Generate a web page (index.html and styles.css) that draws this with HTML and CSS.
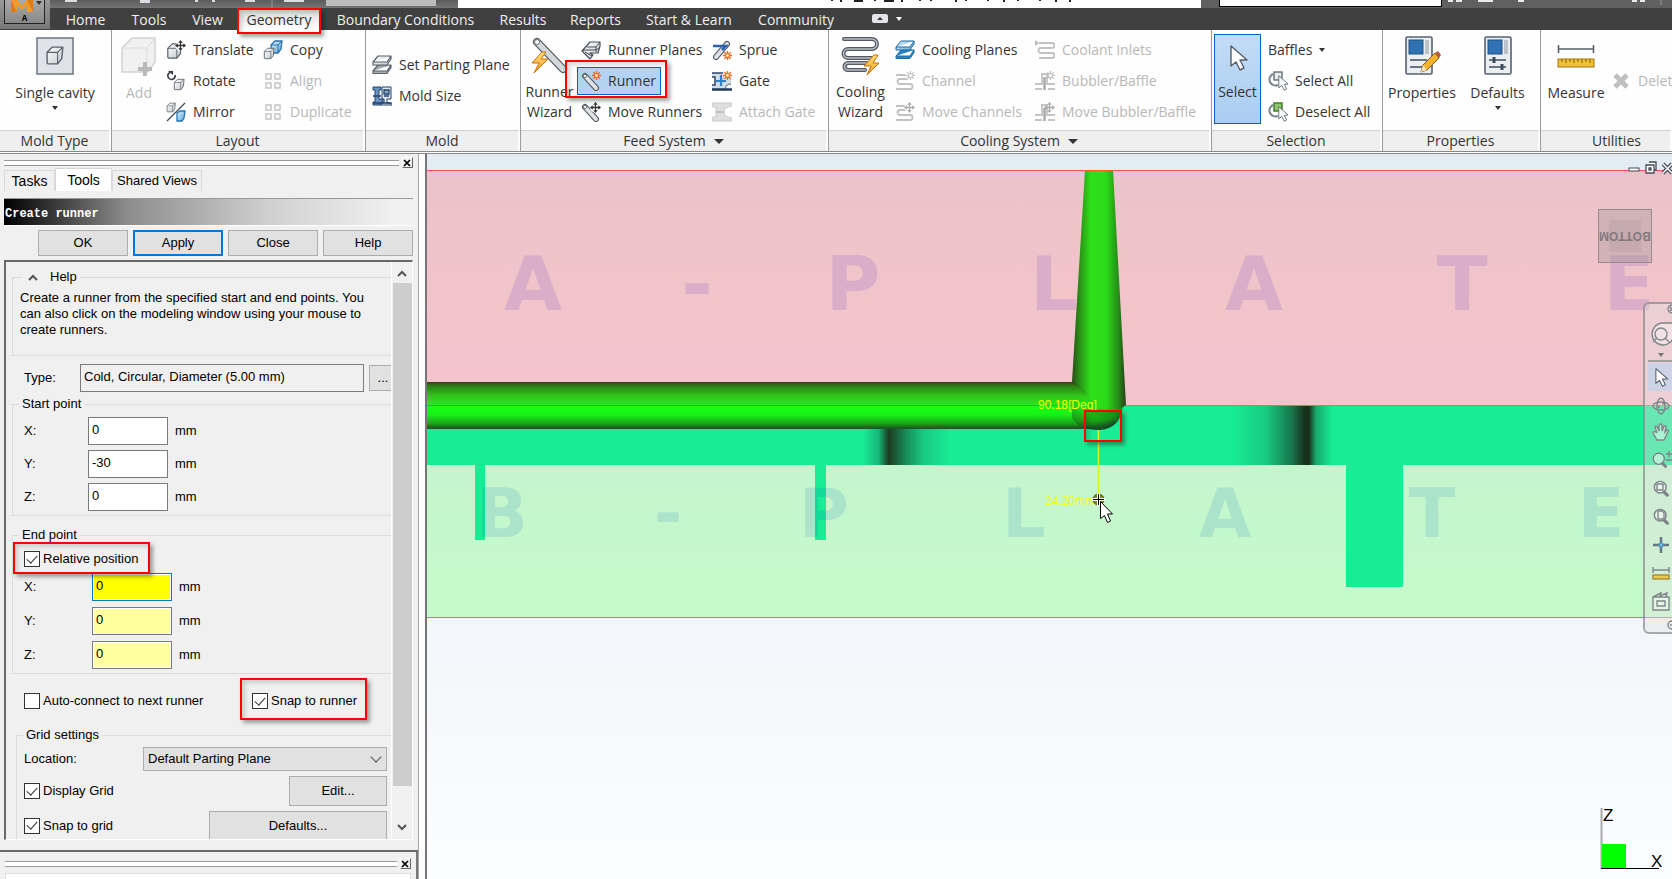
FILE: index.html
```html
<!DOCTYPE html>
<html lang="en">
<head>
<meta charset="utf-8">
<title>Moldflow - Create runner</title>
<link rel="stylesheet" href="styles.css">
</head>
<body>
<svg class="defs" aria-hidden="true">
  <defs>
    <linearGradient id="steel" x1="0" y1="0" x2="1" y2="1"><stop offset="0" stop-color="#fff"/><stop offset="1" stop-color="#c3c7cc"/></linearGradient>
    <linearGradient id="bolt-fill" x1="0" y1="0" x2="0" y2="1"><stop offset="0" stop-color="#ffe27a"/><stop offset="1" stop-color="#f39a1c"/></linearGradient>
    <linearGradient id="blue-fill" x1="0" y1="0" x2="1" y2="1"><stop offset="0" stop-color="#dff1fc"/><stop offset="1" stop-color="#5ba7da"/></linearGradient>
    <symbol id="cube" viewBox="0 0 20 20"><path d="M2 7l5-5h10l-1 11-4 5H3q-1 0-1-1z" fill="url(#steel)" stroke="#59616b" stroke-width="1.3" stroke-linejoin="round"/><path d="M2 7h10l5-5M12 7v11" fill="none" stroke="#59616b"/></symbol>
    <symbol id="star" viewBox="0 0 10 10"><path d="M5 0v10M0 5h10M1.5 1.5l7 7M8.5 1.5l-7 7" stroke="#f0641e" stroke-width="1.5"/><circle cx="5" cy="5" r="2.2" fill="#ffe9b0" stroke="#f0641e"/></symbol>
    <symbol id="star-off" viewBox="0 0 10 10"><path d="M5 0v10M0 5h10M1.5 1.5l7 7M8.5 1.5l-7 7" stroke="#bbb" stroke-width="1.3"/><circle cx="5" cy="5" r="2.2" fill="#fff" stroke="#bbb"/></symbol>
    <symbol id="move" viewBox="0 0 12 12"><path d="M6 1v10M1 6h10" stroke="currentColor" stroke-width="1.4"/><path d="M6 0l2.4 3H3.600zM6 12l2.400-3H3.600zM0 6l3-2.400v4.800zM12 6L9 3.600v4.800z" fill="currentColor"/></symbol>
    <symbol id="translate" viewBox="0 0 20 20"><use href="#cube" x="0" y="2" width="18" height="18"/><circle cx="14.500" cy="6" r="5" fill="#fff"/><use href="#move" x="9" y="0" width="11" height="11"/></symbol>
    <symbol id="rotate" viewBox="0 0 20 20"><use href="#cube" x="7" y="7" width="13" height="13"/><path d="M4 1.500a3.600 3.600 0 1 0 5 2.500" fill="none" stroke="#333b45" stroke-width="1.600"/><path d="M2 0h5v4z" fill="#333b45"/></symbol>
    <symbol id="mirror" viewBox="0 0 20 20"><use href="#cube" x="0" y="0" width="11" height="11"/><path d="M11 11l3-2h5l-1 7-2 3h-5z" fill="url(#blue-fill)" stroke="#2274b8" stroke-width="1.300"/><path d="M19 1L1 19" stroke="#444b55" stroke-width="1.200"/></symbol>
    <symbol id="copy" viewBox="0 0 20 20"><path d="M8 5l4-4h7l-1 8-3 4H8z" fill="url(#blue-fill)" stroke="#2b74ae" stroke-width="1.300"/><path d="M8 5h7l4-4M15 5v7" fill="none" stroke="#2b74ae"/><use href="#cube" x="0" y="7" width="13" height="13"/></symbol>
    <symbol id="grid4" viewBox="0 0 20 20"><path d="M3 3h5v5H3zM12 3h5v5h-5zM3 12h5v5H3zM12 12h5v5h-5z" fill="#fff" stroke="#c4c4c4" stroke-width="1.500"/></symbol>
    <symbol id="planes" viewBox="0 0 20 20"><path d="M1 16l5-6h13l-4 6zM1 16v2.500h14l4-6V10" fill="#a9adb3" stroke="#59616b" stroke-width="1.200" stroke-linejoin="round"/><path d="M1 7l5-6h13l-4 6zM1 7v3h14l4-6V1" fill="url(#steel)" stroke="#59616b" stroke-width="1.200" stroke-linejoin="round"/></symbol>
    <symbol id="planes-blue" viewBox="0 0 20 20"><path d="M1 16l5-6h13l-4 6zM1 16v2.500h14l4-6V10" fill="#2b86c6" stroke="#1b6aa6" stroke-linejoin="round"/><path d="M1 7l5-6h13l-4 6zM1 7v3h14l4-6V1" fill="url(#blue-fill)" stroke="#1b6aa6" stroke-linejoin="round"/></symbol>
    <symbol id="moldsize" viewBox="0 0 20 20"><path d="M1 1h8v3H7v9h4v3H9v3H1v-3h2V4H1z" fill="#6c93bd" stroke="#22426b"/><path d="M10 1h9v12h-4v4h5v2H9v-2h3v-4h-2z" fill="#dfe7f0" stroke="#22426b"/><path d="M12 4h5v4h-5zM12 10h5M1 10h8M1 17h18" stroke="#22426b" stroke-width="1.300" fill="#87a9cc"/></symbol>
    <symbol id="rplanes" viewBox="0 0 20 20"><path d="M1 11l8-9h10v4l-2 7H9l3 2-3 4z" fill="url(#steel)" stroke="#4a4f56" stroke-width="1.200" stroke-linejoin="round"/><path d="M6 7h9l4-5M1 11l3-1h11l3-2M15 7v5M4 12l7 4" fill="none" stroke="#4a4f56"/></symbol>
    <symbol id="tube" viewBox="0 0 20 20"><path d="M4 5l11 12" stroke="#555c65" stroke-width="6" stroke-linecap="round"/><path d="M4 5l11 12" stroke="#dfe3e6" stroke-width="3.800" stroke-linecap="round"/><circle cx="4" cy="5" r="1.600" fill="#fff" stroke="#777"/></symbol>
    <symbol id="runner" viewBox="0 0 20 20"><use href="#tube"/><use href="#star" x="11" y="0" width="9" height="9"/></symbol>
    <symbol id="moverunner" viewBox="0 0 20 20"><use href="#tube"/><circle cx="14" cy="5.500" r="5" fill="#fff"/><use href="#move" x="9" y="0" width="11" height="11"/></symbol>
    <symbol id="sprue" viewBox="0 0 20 20"><path d="M4 17L15 4" stroke="#555c65" stroke-width="6" stroke-linecap="round"/><path d="M4 17L15 4" stroke="#dfe3e6" stroke-width="3.800" stroke-linecap="round"/><path d="M1 6h13l-4 4" stroke="#2c5fae" stroke-width="2.500" fill="none"/><use href="#star" x="11" y="11" width="9" height="9"/></symbol>
    <symbol id="gate" viewBox="0 0 20 20"><path d="M0 2h11v2l2 3h6v7h-5l-2 4H0v-4h3V6H0z" fill="#d3dbe3"/><path d="M0 2h11M0 6h3v8H0" fill="none" stroke="#2c4468" stroke-width="1.500"/><path d="M4 10h10M9 4v11" stroke="#2c84c8" stroke-width="2.200"/><path d="M19 13q-5 0-6 5" fill="none" stroke="#8a97a6" stroke-width="1.500"/><path d="M0 18.500h20" stroke="#22365a" stroke-width="2.500"/><use href="#star" x="11" y="0" width="9" height="9"/></symbol>
    <symbol id="gate-off" viewBox="0 0 20 20"><path d="M0 1h20v3q-8 1-8 6t8 6v3H0v-4h4V5H0z" fill="#dedede" stroke="#cacaca"/><path d="M4 10h8" stroke="#b5b5b5" stroke-width="1.500"/></symbol>
    <symbol id="coil-off" viewBox="0 0 20 20"><path d="M1 4h12a2 2 0 0 1 2 2 2 2 0 0 1-2 2H5a2 2 0 0 0 0 5h10a2 2 0 0 1 0 5H1" fill="none" stroke="#c2c2c2" stroke-width="1.800"/></symbol>
    <symbol id="channel" viewBox="0 0 20 20"><use href="#coil-off"/><circle cx="15.500" cy="4.500" r="5" fill="#fff"/><use href="#star-off" x="11" y="0" width="9" height="9"/></symbol>
    <symbol id="movechannel" viewBox="0 0 20 20"><use href="#coil-off"/><circle cx="14.500" cy="5.500" r="5" fill="#fff"/><use href="#move" x="9" y="0" width="11" height="11" color="#aaa"/></symbol>
    <symbol id="inlets" viewBox="0 0 20 20"><path d="M4 3h13a2 2 0 0 1 0 5H6a2 2 0 0 0 0 5h11a2 2 0 0 1 0 5H4" fill="none" stroke="#c2c2c2" stroke-width="1.800"/><path d="M0 0l4 3-4 3z" fill="#bbb"/></symbol>
    <symbol id="bubbler" viewBox="0 0 20 20"><path d="M0 13h7V3h5v10h8M0 18h7M13 18h7" fill="none" stroke="#c4c4c4" stroke-width="1.800"/><path d="M9.500 6v13" stroke="#aaa" stroke-width="2.500"/></symbol>
    <symbol id="bubblerstar" viewBox="0 0 20 20"><use href="#bubbler"/><use href="#star-off" x="11" y="0" width="9" height="9"/></symbol>
    <symbol id="bubblermove" viewBox="0 0 20 20"><use href="#bubbler"/><use href="#move" x="9" y="0" width="11" height="11" color="#aaa"/></symbol>
    <symbol id="cursor" viewBox="0 0 20 26"><path d="M3 1v20l5-4 4 8 4-2-4-8h7z" fill="#fff" stroke="#555e69" stroke-width="1.400" stroke-linejoin="round"/></symbol>
    <symbol id="selectall" viewBox="0 0 20 20"><path d="M5 3a6 6 0 1 0 5 11" fill="none" stroke="#7d858e" stroke-width="2"/><rect x="6" y="1" width="8" height="8" fill="#e6eaee" stroke="#5b646f" stroke-width="1.300"/><use href="#cursor" x="9" y="4" width="12" height="16"/></symbol>
    <symbol id="deselectall" viewBox="0 0 20 20"><path d="M5 3a6 6 0 1 0 5 11" fill="none" stroke="#7d858e" stroke-width="2"/><rect x="6" y="1" width="8" height="8" fill="#8fc46c" stroke="#3f7f2b" stroke-width="1.500"/><use href="#cursor" x="9" y="4" width="12" height="16"/></symbol>
    <symbol id="sheet" viewBox="0 0 36 40"><rect x="2" y="1" width="26" height="37" rx="1.500" fill="#eceef0" stroke="#566171" stroke-width="1.600"/><rect x="5" y="4" width="14" height="14" fill="#2f71b3" stroke="#23517f"/><path d="M21 4h4v14h-4z" fill="#bcc2c9"/><path d="M6 24h17M6 31h17" stroke="#3c4c60" stroke-width="1.600"/></symbol>
    <symbol id="loupe" viewBox="0 0 20 20"><path d="M11 12l6 6" stroke="#7c8388" stroke-width="3.500"/><circle cx="8" cy="8" r="6.500" fill="#fff" fill-opacity=".5" stroke="#7c8388" stroke-width="1.600"/></symbol>
  </defs>
</svg>

<header class="top">
  <div class="titlebar">
    <div class="quick">
      <svg width="408" height="8"><path d="M15 0h12v2H15zM90 0h10v3H90zM145 0h3v2h-3zM162 0h3v2h-3zM195 0h10v2H195zM234 0h20v2H234z" fill="#d9dde2"/><path d="M222 0v8" stroke="#999"/></svg>
      <span class="quick-box"></span>
    </div>
    <svg class="title-marks" width="290" height="4"><path d="M14 0v1M23 0v2M36 1h9M57 0v1M66 1h10M84 0v2M102 0v1M113 0v1M138 0v2M148 0v1M170 0v1M186 0v2M200 0v1M222 0v1M238 0v2M252 0v2" stroke="#222" stroke-width="2"/></svg>
    <input class="search" aria-label="Search">
    <svg class="tool-marks" width="230" height="8"><path d="M6 0h5v2H6zM14 0h6v2h-6zM36 0h15v2H36zM76 0h6v2h-6zM190 0h5v2h-5zM198 0h5v2h-5z" fill="#e9e9ee"/><path d="M219 0v5" stroke="#999"/></svg>
  </div>
  <nav class="tabs">
    <a href="#home">Home</a><a href="#tools">Tools</a><a href="#view">View</a><a class="on mark" href="#geometry">Geometry</a><a href="#boundary">Boundary Conditions</a><a href="#results">Results</a><a href="#reports">Reports</a><a href="#learn">Start &amp; Learn</a><a href="#community">Community</a>
    <button class="collapse" aria-label="Collapse ribbon"><svg width="32" height="10"><rect width="16" height="9" rx="2" fill="#e4e4ea"/><path d="M5 6l3-3 3 3z" fill="#333"/><path d="M24 3h6l-3 4z" fill="#fff"/></svg></button>
  </nav>
  <button class="app" aria-label="Application menu"><span class="app-face"><svg width="34" height="12"><path d="M3 12V0h6l5 6 5-6h6v12h-6V5l-5 5-5-5v7z" fill="#f39a24"/><path d="M3 0l6 12H3zM19 0l6 12V0z" fill="#c96a14" opacity=".6"/><path d="M28 1h6l-3 4z" fill="#333"/></svg><b>A</b></span></button>
</header>

<section class="ribbon">
  <div class="group g-type">
    <div class="body">
      <button class="big"><svg width="40" height="40"><rect x="2" y="2" width="36" height="36" fill="#e0e3ea" stroke="#6b7583" stroke-width="1.500"/><use href="#cube" x="10" y="9" width="21" height="21"/></svg>Single cavity<i class="arr"></i></button>
    </div><h2>Mold Type</h2>
  </div>
  <div class="group g-layout">
    <div class="body">
      <button class="big off" disabled><svg width="40" height="40"><path d="M3 12L13 2h23v24L29 36H3z" fill="#f1f1f1" stroke="#d2d2d2" stroke-width="1.500"/><path d="M3 12h25l8-10M28 12v24" fill="none" stroke="#dcdcdc"/><path d="M26 26v14M19 33h14" stroke="#b9b9b9" stroke-width="4"/></svg>Add</button>
      <div class="col"><button><svg><use href="#translate"/></svg>Translate</button><button><svg><use href="#rotate"/></svg>Rotate</button><button><svg><use href="#mirror"/></svg>Mirror</button></div>
      <div class="col"><button><svg><use href="#copy"/></svg>Copy</button><button class="off" disabled><svg><use href="#grid4"/></svg>Align</button><button class="off" disabled><svg><use href="#grid4"/></svg>Duplicate</button></div>
    </div><h2>Layout</h2>
  </div>
  <div class="group g-mold">
    <div class="body"><div class="col two"><button><svg><use href="#planes"/></svg>Set Parting Plane</button><button><svg><use href="#moldsize"/></svg>Mold Size</button></div></div><h2>Mold</h2>
  </div>
  <div class="group g-feed">
    <div class="body">
      <button class="big wiz"><svg width="40" height="40"><path d="M7 6l26 27" stroke="#555c65" stroke-width="8" stroke-linecap="round"/><path d="M7 6l26 27" stroke="#d3d8dc" stroke-width="5.500" stroke-linecap="round"/><circle cx="7" cy="6" r="2.500" fill="#fff" stroke="#777"/><path d="M12 16L2 27h7l-5 10 14-14h-7l5-7z" fill="url(#bolt-fill)" stroke="#c9700c"/></svg>Runner<br>Wizard</button>
      <div class="col"><button><svg><use href="#rplanes"/></svg>Runner Planes</button><button class="active mark"><svg><use href="#runner"/></svg>Runner</button><button><svg><use href="#moverunner"/></svg>Move Runners</button></div>
      <div class="col"><button><svg><use href="#sprue"/></svg>Sprue</button><button><svg><use href="#gate"/></svg>Gate</button><button class="off" disabled><svg><use href="#gate-off"/></svg>Attach Gate</button></div>
    </div><h2>Feed System<i class="arr wide"></i></h2>
  </div>
  <div class="group g-cool">
    <div class="body">
      <button class="big wiz"><svg width="40" height="40"><g fill="none" stroke-linecap="round"><path d="M3 3h28a5 5 0 0 1 0 10H7a4 4 0 0 0 0 9h24M26 27H7a3 3 0 0 0 0 7h17" stroke="#555a62" stroke-width="4"/><path d="M3 3h28a5 5 0 0 1 0 10H7a4 4 0 0 0 0 9h24M26 27H7a3 3 0 0 0 0 7h17" stroke="#b9bec6" stroke-width="1.500"/></g><path d="M33 19L23 30h7l-4 9 12-12h-6l5-8z" fill="url(#bolt-fill)" stroke="#c9700c"/></svg>Cooling<br>Wizard</button>
      <div class="col"><button><svg><use href="#planes-blue"/></svg>Cooling Planes</button><button class="off" disabled><svg><use href="#channel"/></svg>Channel</button><button class="off" disabled><svg><use href="#movechannel"/></svg>Move Channels</button></div>
      <div class="col"><button class="off" disabled><svg><use href="#inlets"/></svg>Coolant Inlets</button><button class="off" disabled><svg><use href="#bubblerstar"/></svg>Bubbler/Baffle</button><button class="off" disabled><svg><use href="#bubblermove"/></svg>Move Bubbler/Baffle</button></div>
    </div><h2>Cooling System<i class="arr wide"></i></h2>
  </div>
  <div class="group g-sel">
    <div class="body">
      <button class="big select-tool"><svg width="20" height="26"><use href="#cursor"/></svg>Select</button>
      <div class="col"><button>Baffles<i class="arr"></i></button><button><svg><use href="#selectall"/></svg>Select All</button><button><svg><use href="#deselectall"/></svg>Deselect All</button></div>
    </div><h2>Selection</h2>
  </div>
  <div class="group g-prop">
    <div class="body">
      <button class="big"><svg width="36" height="40"><use href="#sheet"/><path d="M17 36l2-7 12-12 4 5-12 12z" fill="#f3b32c" stroke="#8a5a14"/><path d="M31 17l4 5 2-3-3-4z" fill="#b85a3a"/><path d="M17 36l2-7 4 5z" fill="#f6e3c0"/></svg>Properties</button>
      <button class="big"><svg width="36" height="40"><g transform="translate(3 0)"><use href="#sheet" width="36" height="40"/><path d="M11 21v6M19 28v6" stroke="#3c4c60" stroke-width="3"/></g></svg>Defaults<i class="arr"></i></button>
    </div><h2>Properties</h2>
  </div>
  <div class="group g-util">
    <div class="body">
      <button class="big"><svg width="40" height="40"><path d="M2 13h36M2.500 9v8M37.500 9v8" stroke="#59626c" stroke-width="1.600"/><rect x="2" y="23" width="36" height="8" fill="#f0c035" stroke="#a87410"/><path d="M6 23v3M10 23v4M14 23v3M18 23v4M22 23v3M26 23v4M30 23v3M34 23v4" stroke="#8a5f0c"/></svg>Measure</button>
      <div class="col mid"><button class="off" disabled><svg viewBox="0 0 20 20"><path d="M4 4l12 12M16 4L4 16" stroke="#c0c0c0" stroke-width="5"/></svg>Delete</button></div>
    </div><h2>Utilities</h2>
  </div>
</section>

<main class="work">
  <aside class="side">
    <section class="dock">
      <div class="grip"><span></span><button aria-label="Close panel"><svg width="9" height="8"><path d="M1 1l6 6M7 1L1 7" stroke="#000" stroke-width="1.700"/></svg></button></div>
      <div class="ptabs"><button>Tasks</button><button class="on">Tools</button><button>Shared Views</button></div>
      <h1>Create runner</h1>
      <div class="actions"><button>OK</button><button class="default">Apply</button><button>Close</button><button>Help</button></div>
      <div class="scroller">
        <form class="form">
          <fieldset class="help"><legend><svg width="10" height="7"><path d="M1 6l4-4 4 4" fill="none" stroke="#555" stroke-width="2"/></svg>Help</legend>
            <p>Create a runner from the specified start and end points. You can also click on the modeling window using your mouse to create runners.</p>
          </fieldset>
          <div class="type"><label for="type">Type:</label><input id="type" value="Cold, Circular, Diameter (5.00 mm)" readonly><button type="button">...</button></div>
          <fieldset class="start"><legend>Start point</legend>
            <div class="xyz"><label for="sx">X:</label><input id="sx" value="0"><span>mm</span></div>
            <div class="xyz"><label for="sy">Y:</label><input id="sy" value="-30"><span>mm</span></div>
            <div class="xyz"><label for="sz">Z:</label><input id="sz" value="0"><span>mm</span></div>
          </fieldset>
          <fieldset class="end"><legend>End point</legend>
            <label class="check mark"><input type="checkbox" checked>Relative position</label>
            <div class="xyz"><label for="ex">X:</label><input id="ex" class="focus" value="0"><span>mm</span></div>
            <div class="xyz"><label for="ey">Y:</label><input id="ey" value="0"><span>mm</span></div>
            <div class="xyz"><label for="ez">Z:</label><input id="ez" value="0"><span>mm</span></div>
          </fieldset>
          <div class="snap"><label class="check"><input type="checkbox">Auto-connect to next runner</label><label class="check mark"><input type="checkbox" checked>Snap to runner</label></div>
          <fieldset class="gridset"><legend>Grid settings</legend>
            <div class="row loc"><label for="loc">Location:</label><select id="loc"><option>Default Parting Plane</option></select></div>
            <div class="row"><label class="check"><input type="checkbox" checked>Display Grid</label><button type="button" class="edit">Edit...</button></div>
            <div class="row"><label class="check"><input type="checkbox" checked>Snap to grid</label><button type="button" class="defaults">Defaults...</button></div>
          </fieldset>
        </form>
        <div class="bar"><svg width="10" height="7"><path d="M1 6l4-4 4 4" fill="none" stroke="#555" stroke-width="2"/></svg><span></span><svg width="10" height="7"><path d="M1 1l4 4 4-4" fill="none" stroke="#555" stroke-width="2"/></svg></div>
      </div>
    </section>
    <section class="dock2"><div class="grip"><span></span><button aria-label="Close log"><svg width="9" height="8"><path d="M1 1l6 6M7 1L1 7" stroke="#000" stroke-width="1.700"/></svg></button></div><div class="log"></div></section>
  </aside>

  <section class="view" aria-label="Model view">
    <svg class="scene">
      <defs>
        <linearGradient id="pink" x1="0" y1="0" x2="0" y2="1"><stop offset="0" stop-color="#ebc3c8"/><stop offset=".5" stop-color="#f1c4ca"/><stop offset="1" stop-color="#f4c4cc"/></linearGradient>
        <linearGradient id="lime" x1="0" y1="0" x2="0" y2="1"><stop offset="0" stop-color="#c4f5cd"/><stop offset="1" stop-color="#c6facb"/></linearGradient>
        <linearGradient id="pipe" x1="0" y1="0" x2="0" y2="1"><stop offset="0" stop-color="#3a3a1c"/><stop offset=".08" stop-color="#2c7c14"/><stop offset=".3" stop-color="#2fc818"/><stop offset=".48" stop-color="#30e41a"/><stop offset=".54" stop-color="#14ff14"/><stop offset=".7" stop-color="#18f018"/><stop offset=".88" stop-color="#18a818"/><stop offset=".97" stop-color="#186418"/><stop offset="1" stop-color="#205030"/></linearGradient>
        <linearGradient id="cone" x1="0" y1="0" x2="1" y2="0"><stop offset="0" stop-color="#2c4a18"/><stop offset=".14" stop-color="#2a9018"/><stop offset=".35" stop-color="#2ee018"/><stop offset=".62" stop-color="#2cdc18"/><stop offset=".86" stop-color="#268c18"/><stop offset="1" stop-color="#2a3c18"/></linearGradient>
        <radialGradient id="cap" cx=".35" cy=".1" r=".85"><stop offset=".3" stop-color="#20d818"/><stop offset=".75" stop-color="#189a18"/><stop offset="1" stop-color="#174c20"/></radialGradient>
        <linearGradient id="fold-a"><stop offset="0" stop-color="#18ec94"/><stop offset=".18" stop-color="#18b478"/><stop offset=".29" stop-color="#1c3c24"/><stop offset=".33" stop-color="#1c4c2c"/><stop offset=".5" stop-color="#18905c"/><stop offset=".7" stop-color="#18cc84"/><stop offset="1" stop-color="#18ec94"/></linearGradient>
        <linearGradient id="fold-b"><stop offset="0" stop-color="#18ec94"/><stop offset=".35" stop-color="#18c880"/><stop offset=".6" stop-color="#18744c"/><stop offset=".73" stop-color="#18301c"/><stop offset=".77" stop-color="#18301c"/><stop offset=".84" stop-color="#18a86c"/><stop offset="1" stop-color="#18ec94"/></linearGradient>
      </defs>
      <rect y="17" width="100%" height="235" fill="url(#pink)"/>
      <rect y="16" width="100%" height="1" fill="#ff4d50"/>
      <rect y="311" width="100%" height="152" fill="url(#lime)"/>
      <rect y="252" width="100%" height="59" fill="#18ec94"/>
      <path d="M49 311h10v75H49zM389 311h11v75h-11zM920 311h57v122h-57z" fill="#18ec94"/>
      <rect x="437" y="274" width="88" height="37" fill="url(#fold-a)"/>
      <rect x="806" y="252" width="100" height="59" fill="url(#fold-b)"/>
      <rect y="463" width="100%" height="1" fill="#00f000"/>
      <rect y="251" width="100%" height="1" fill="#8c9c60"/>
      <rect y="228" width="673" height="47" fill="url(#pipe)"/>
      <rect y="251" width="650" height="1" fill="#5c9c30"/>
      <path d="M646 246h51v5q-2 24-24 25-20 0-27-12z" fill="url(#cap)"/>
      <path d="M659 16h28l13 235q-10 9-31 2-13-23-23-25z" fill="url(#cone)"/>
      <rect x="659" y="16" width="28" height="1" fill="#f06018"/>
      <g class="plate plate-a"><text x="107" y="156">A</text><text x="271" y="156">-</text><text x="427" y="156">P</text><text x="628" y="156">L</text><text x="828" y="156">A</text><text x="1036" y="156">T</text><text x="1203" y="156">E</text></g>
      <g class="plate plate-b"><text x="76" y="383">B</text><text x="242" y="383">-</text><text x="398" y="383">P</text><text x="598" y="383">L</text><text x="799" y="383">A</text><text x="1006" y="383">T</text><text x="1175" y="383">E</text></g>
      <path d="M672.500 276v66" stroke="#e6ee20" stroke-width="1.500"/>
      <text class="dim" x="612" y="255">90.18[Deg]</text><text class="dim" x="619" y="351">24.20mm</text>
      <circle cx="672.500" cy="345.500" r="5.500" fill="#7d8c20" stroke="#4a5410"/><path d="M672.500 339v13M666 345.500h13" stroke="#fff" stroke-width="3"/><path d="M672.500 340v11M667 345.500h11" stroke="#000"/>
      <path d="M674.500 347.500v17l4-3 3 7 3-1.500-3-7h5z" fill="#fff" stroke="#000"/>
    </svg>
    <span class="pick mark"></span>
    <div class="winbtns">
      <button aria-label="Minimize"><svg width="12" height="14"><rect x="1" y="7" width="10" height="3" fill="#fff" stroke="#444c55"/></svg></button>
      <button aria-label="Restore"><svg width="12" height="14"><path d="M4 1h7v8h-2M1 4h8v8H1zM4 7h2v2H4z" fill="#fff" stroke="#444c55" stroke-width="1.300"/></svg></button>
      <button aria-label="Close"><svg width="12" height="14"><path d="M1 3l9 9M10 3l-9 9" stroke="#444c55" stroke-width="4"/><path d="M1 3l9 9M10 3l-9 9" stroke="#fff" stroke-width="1.500"/></svg></button>
    </div>
    <div class="cube"><span>BOTTOM</span></div>
    <div class="navbar">
      <svg width="36" height="332" fill="none" stroke="#81878b" stroke-width="1.400">
        <circle cx="27" cy="5" r="4"/><path d="M24.500 2.500l5 5M29.500 2.500l-5 5"/>
        <g transform="translate(-1 -2)">
        <path d="M18 21h12v12a11 11 0 1 1-12-12z" fill="#fff" fill-opacity=".4"/><circle cx="17" cy="32" r="6"/><path d="M9 40l4-4M21 36l4 4"/>
        <path d="M14 51h6l-3 4z" fill="#777" stroke="none"/><path d="M4 59h32"/>
        <rect x="4" y="61" width="32" height="28" fill="#b9d4f4" fill-opacity=".6" stroke="none"/>
        <use href="#cursor" x="9" y="66" width="16" height="19"/>
        <ellipse cx="17" cy="104" rx="8" ry="4"/><ellipse cx="17" cy="104" rx="4" ry="8"/><path d="M13 105h3M18 101h4M20 99v4"/>
        <path d="M13 138l-4-7q0-2 3-1l1 1-2-6q1-2 3 1l1 3v-6q2-2 3 0v6l2-5q2-1 2 1l-1 5 2-2q2 0 1 2l-4 8z" fill="#fff" fill-opacity=".45"/>
        <use href="#loupe" x="8" y="150" width="17" height="17"/><path d="M22 152h6M25 149v6M22 158h6"/>
        <use href="#loupe" x="9" y="178" width="18" height="18"/><path d="M13 182h6v6h-6z"/>
        <use href="#loupe" x="9" y="206" width="18" height="18"/><path d="M14 209h4l2 2v6h-6z"/>
        <path d="M17 235v6M17 245v6M9 243h6M19 243h6" stroke-width="2.500" stroke="#68777f"/><circle cx="17" cy="243" r="2" fill="#77b8dc" stroke="#4b99c4"/>
        <path d="M9 268h16M9 265v6M25 265v6"/><rect x="9" y="273" width="16" height="4" fill="#ecc84a" stroke="#a88a3c"/>
        <path d="M9 295h16v13H9zM9 295l8-4-1 3 7-3-1 4M13 299h8v5h-8z" fill="#fff" fill-opacity=".4"/>
        <circle cx="28" cy="323" r="4"/><path d="M26 323h4"/>
        </g>
      </svg>
    </div>
    <svg class="triad" width="70" height="72"><path d="M6.500 10v61" stroke="#aaa" stroke-width="2"/><rect x="7" y="46" width="24" height="24" fill="#0f0"/><path d="M6 70.500h58" stroke="#000"/><text x="8" y="23">Z</text><text x="56" y="69">X</text></svg>
  </section>
</main>
</body>
</html>
```
FILE: styles.css
```css
* { box-sizing: border-box; }
html, body { height: 100%; }
body { margin: 0; display: flex; flex-direction: column; overflow: hidden; background: #f0f0f0; color: #000; font: 13px/16px "Liberation Sans", Arial, sans-serif; }
button { font: inherit; color: inherit; padding: 0; border: 0; background: none; white-space: nowrap; }
h1, h2, p, fieldset { margin: 0; padding: 0; }
.defs { position: absolute; width: 0; height: 0; }
svg { flex: none; display: block; }

/* red callout frames */
.mark { position: relative; }
.mark::after { content: ""; position: absolute; inset: 0; border: 2px solid #f00; box-shadow: 3px 3px 4px rgba(0,0,0,.35), inset 3px 3px 4px rgba(0,0,0,.15); pointer-events: none; z-index: 3; }

/* title bar and tabs */
.top { position: relative; flex: none; font-family: "Open Sans", "Noto Sans", sans-serif; }
.titlebar { display: flex; height: 8px; overflow: hidden; background: #606060; }
.quick { display: flex; width: 458px; padding-left: 50px; background: linear-gradient(#5c5c5c, #757575); }
.quick svg { width: 276px; }
.quick-box { width: 110px; height: 6px; background: #bdbdbd; }
.title-marks { flex: 1; background: #fff; padding-left: 360px; overflow: visible; height: 8px; }
.search { width: 223px; margin-left: 18px; height: 7px; padding: 0; border: 1px solid #000; border-top: 0; background: #fff; }
.tabs { display: flex; height: 22px; padding-left: 54px; background: #404040; color: #f0f0f0; font-size: 14px; line-height: 24px; }
.tabs a { color: inherit; text-decoration: none; width: 63px; text-align: center; white-space: nowrap; }
.tabs a:nth-child(2) { width: 64px; }
.tabs a:nth-child(3) { width: 53px; }
.tabs a.on { width: 84px; margin: 0 6px 0 3px; background: linear-gradient(#d9d9d9, #fff); color: #333; }
.tabs a.on::after { bottom: -4px; }
.tabs a:nth-child(5) { width: 157px; }
.tabs a:nth-child(6) { width: 78px; }
.tabs a:nth-child(7) { width: 67px; }
.tabs a:nth-child(8) { width: 120px; }
.tabs a:nth-child(9) { width: 94px; }
.collapse { margin-left: 29px; }
.app { position: absolute; left: 0; top: 0; width: 50px; height: 29px; background: linear-gradient(#9a9a9a, #777); z-index: 2; }
.app-face { display: flex; flex-direction: column; align-items: center; width: 41px; height: 24px; margin: 0 4px 5px; border: 1px solid #222; border-top: 0; background: linear-gradient(#aaa, #888); font-size: 8px; line-height: 11px; color: #000; }

/* ribbon */
.ribbon { display: flex; flex: none; height: 124px; background: #fefefe; border-bottom: 3px double #888; color: #333; font: 14px/20px "Open Sans", "Noto Sans", sans-serif; }
.group { display: flex; flex-direction: column; flex: none; border-right: 1px solid #9a9a9a; }
.body { display: grid; flex: 1; align-items: start; padding-top: 5px; }
.group h2 { display: flex; justify-content: center; align-items: center; gap: 8px; height: 21px; margin-right: 2px; background: #efefef; border-top: 1px solid #d0d0d0; font-size: 14px; font-weight: 400; }
.g-type { width: 112px; } .g-type .body { grid-template-columns: 110px; }
.g-layout { width: 254px; } .g-layout .body { grid-template-columns: 54px 97px 1fr; }
.g-mold { width: 155px; } .g-mold .body { padding-left: 6px; }
.g-feed { width: 308px; } .g-feed .body { grid-template-columns: 60px 131px 1fr; }
.g-cool { width: 383px; } .g-cool .body { grid-template-columns: 66px 140px 1fr; }
.g-sel { width: 171px; } .g-sel .body { grid-template-columns: 54px 1fr; padding-left: 2px; }
.g-prop { width: 158px; } .g-prop .body { grid-template-columns: 78px 73px; }
.g-util { flex: 1; min-width: 0; overflow: hidden; border-right: 0; } .g-util .body { grid-template-columns: 70px 1fr; }
.g-util h2 { padding-left: 22px; }
.col { display: flex; flex-direction: column; align-items: flex-start; gap: 11px; padding-top: 5px; }
.col.two { padding-top: 20px; }
.col.mid { padding-top: 36px; }
.col button { display: flex; align-items: center; gap: 7px; height: 20px; }
.col button svg { width: 20px; height: 20px; }
.big { display: flex; flex-direction: column; align-items: center; padding-top: 1px; line-height: 20px; }
.big > svg { margin-bottom: 7px; overflow: visible; }
.big.wiz { display: block; text-align: center; }
.big.wiz > svg { margin: 0 auto 6px; }
.g-feed .wiz { padding-right: 3px; }
.g-cool .wiz { padding-right: 3px; }
.big > .arr { margin-top: 3px; }
.off { color: #b8b8b8; }
.arr { width: 0; height: 0; border: 3px solid transparent; border-top: 4px solid #333; border-bottom: 0; }
.arr.wide { border-left-width: 5px; border-right-width: 5px; border-top-width: 5px; }
.col button.active { width: 76px; background: #b4d3f3; box-shadow: 0 0 0 3px #b4d3f3, 0 0 0 4px #0a62c4; }
.active.mark::after { inset: -11px -10px -7px -16px; }
.select-tool { width: 47px; height: 90px; margin-top: -1px; padding-top: 10px; border: 1px solid #0a62c4; background: linear-gradient(#c3dcf6, #aacdf0); }
.select-tool > svg { margin-bottom: 11px; }

/* workspace */
.work { display: flex; flex: 1; min-height: 0; }
.side { display: flex; flex-direction: column; width: 427px; flex: none; border-right: 2px solid #76767a; box-shadow: inset -6px 0 #fff, inset -7px 0 #a9a9a9; padding-right: 7px; }
.dock { display: flex; flex-direction: column; flex: 1; min-height: 0; padding: 3px 5px 10px 4px; border-bottom: 2px solid #6a6a6a; }
.grip { display: flex; align-items: center; gap: 3px; height: 11px; }
.grip span { flex: 1; height: 6px; border: 1px solid #999; border-left: 0; border-right: 0; background: #fff; }
.grip button { width: 11px; height: 11px; border: 1px solid; border-color: #fff #666 #666 #fff; }
.ptabs { display: flex; align-items: flex-end; height: 23px; font-size: 14px; }
.ptabs button { height: 21px; padding: 0 4px; border: 1px solid #d9d9d9; border-bottom: 0; }
.ptabs button:first-child { width: 51px; }
.ptabs .on { height: 23px; width: 57px; background: #fff; }
.ptabs button:last-child { font-size: 13px; }
.dock h1 { flex: none; height: 28px; margin-top: 7px; padding-left: 1px; line-height: 30px; color: #fff; background: linear-gradient(90deg, #000 0, #8c8c8c 30%, #d0d0d0 65%, #f0f0f0 95%); border-top: 1px solid #999; border-bottom: 1px solid #fff; font-family: "Liberation Mono", monospace; font-size: 12px; }
.actions { display: flex; justify-content: flex-end; gap: 5px; margin: 4px 0; }
.actions button, .type button, .edit, .defaults { border: 1px solid #adadad; background: #e1e1e1; }
.actions button { width: 90px; height: 26px; }
.actions .default { border: 2px solid #0078d7; }
.scroller { display: flex; flex: 1; min-height: 0; overflow: hidden; border: 2px solid #696969; border-right: 1px solid #fff; border-bottom: 1px solid #fff; }
.form { flex: 1; min-width: 0; padding: 7px 0 0 6px; overflow: hidden; }
.bar { display: flex; flex-direction: column; align-items: center; width: 21px; padding: 8px 1px; border-left: 1px solid #fff; }
.bar span { width: 19px; flex: 1; margin: 6px 0 38px; background: #cdcdcd; }
fieldset { min-width: 0; border: 1px solid #dcdcdc; border-right: 0; }
legend { margin-left: -5px; padding: 0 3px; }
.help { padding: 5px 0 17px 7px; }
.help legend { display: flex; align-items: center; gap: 12px; margin-left: 2px; padding-left: 6px; }
.help p { width: 360px; }
.type { display: flex; align-items: center; margin-top: 8px; padding-left: 12px; }
.type label { width: 56px; flex: none; }
.type button { width: 28px; height: 26px; margin-left: 5px; flex: none; }
.form input:not([type]) { height: 28px; width: 80px; padding: 0 3px 4px; border: 1px solid #7a7a7a; background: #fff; font: inherit; }
.form .type input:not([type]) { width: 284px; background: #f0f0f0; flex: none; }
.start { margin-top: 4px; padding: 5px 0 4px 11px; }
.xyz { display: flex; align-items: center; }
.xyz + .xyz { margin-top: 5px; }
.xyz label { width: 64px; }
.xyz span { margin-left: 7px; }
.end { margin-top: 11px; padding: 8px 0 4px 11px; }
.end .xyz { margin-top: 6px; }
.end .xyz label { width: 68px; }
.form .end input:not([type]) { background: #ffffa0; box-shadow: inset 0 0 0 1px #fff; }
.form .end .focus:not([type]) { background: #ff0; border-color: #0078d7; }
.check { display: inline-flex; align-items: center; gap: 3px; height: 16px; }
.check input { appearance: none; width: 16px; height: 16px; margin: 0; border: 1px solid #333; background: #fff; display: grid; place-items: center; }
.check input:checked::before { content: ""; width: 5px; height: 9px; margin-top: -3px; border: solid #333; border-width: 0 1px 1px 0; transform: rotate(42deg); }
.end .check { display: flex; width: max-content; }
.end .mark::after { inset: -9px -12px -7px -11px; }
.snap { display: flex; justify-content: space-between; margin-top: 19px; padding: 0 34px 0 12px; }
.snap .mark::after { inset: -15px -10px -11px -12px; }
.gridset { margin: 18px 0 0 4px; padding: 4px 4px 0 7px; }
.gridset legend { margin-left: -1px; }
.row { display: flex; align-items: center; justify-content: space-between; }
.row + .row { margin-top: 5px; }
.row select { appearance: none; width: 244px; height: 24px; padding: 0 4px; border: 1px solid #adadad; border-radius: 0; color: #000; font: inherit; background: #e1e1e1; }
.loc { position: relative; }
.loc::after { content: ""; position: absolute; right: 7px; top: 6px; width: 7px; height: 7px; border: solid #555; border-width: 0 1px 1px 0; transform: rotate(45deg); }
.edit { width: 98px; height: 30px; }
.defaults { width: 178px; height: 29px; }
.dock2 { flex: none; height: 27px; padding: 6px 5px 0; border-right: 2px solid #777; }
.log { height: 8px; margin-top: 4px; background: #fff; border: 1px solid #ddd; }

/* model view */
.view { position: relative; flex: 1; min-width: 0; overflow: hidden; background: linear-gradient(#e3ebf3, #f3f6fa 65%, #fcfdff); }
.scene { position: absolute; inset: 0 0 0 -1px; width: calc(100% + 1px); height: 100%; }
.plate { font: bold 75px "DejaVu Sans", sans-serif; text-anchor: middle; }
.plate-a { fill: rgba(120, 80, 190, .19); }
.plate-b { fill: rgba(0, 100, 190, .13); font-size: 68px; }
.dim { font-size: 12px; fill: #f6ff00; }
.pick { position: absolute; left: 657px; top: 256px; width: 38px; height: 32px; }
.winbtns { position: absolute; right: -2px; top: 7px; display: flex; gap: 5px; }
.cube { position: absolute; right: 20px; top: 55px; width: 54px; height: 54px; display: grid; place-items: center; border: 1px solid #958c8e; background: rgba(140, 140, 140, .3); color: #84797d; font-size: 12px; font-weight: bold; }
.cube::before { content: ""; position: absolute; inset: 10px; background: rgba(120, 110, 130, .12); }
.cube span { transform: rotate(180deg); }
.navbar { position: absolute; right: -8px; top: 148px; width: 37px; height: 332px; border: 2px solid rgba(120, 120, 120, .6); border-radius: 6px; background: rgba(225, 225, 225, .4); }
.triad { position: absolute; right: 7px; bottom: 9px; font: 17px "Liberation Sans", sans-serif; }
```
